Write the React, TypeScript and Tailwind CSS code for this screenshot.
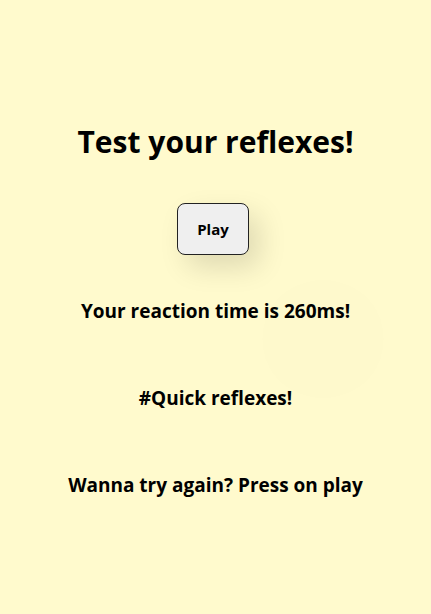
export default function App() {
  return (
    <div
      className="min-h-[614px] bg-[#fffacd] text-black flex flex-col items-center"
      style={{ fontFamily: '"Open Sans", "Noto Sans", sans-serif' }}
    >
      <h1 className="mt-[121px] text-[30px] leading-[42px] font-bold">Test your reflexes!</h1>

      <button className="mt-[40px] mr-[5px] w-[72px] h-[52px] rounded-lg border border-[#222] bg-[#efefef] text-[15px] font-bold shadow-[10px_12px_28px_rgba(0,0,0,0.13),110px_110px_110px_rgba(0,0,0,0.035)]">
        Play
      </button>

      <p className="mt-[42px] text-[19px] leading-[28px] font-bold">Your reaction time is 260ms!</p>
      <p className="mt-[59px] text-[19px] leading-[28px] font-bold">#Quick reflexes!</p>
      <p className="mt-[59px] text-[19px] leading-[28px] font-bold">Wanna try again? Press on play</p>
    </div>
  )
}
